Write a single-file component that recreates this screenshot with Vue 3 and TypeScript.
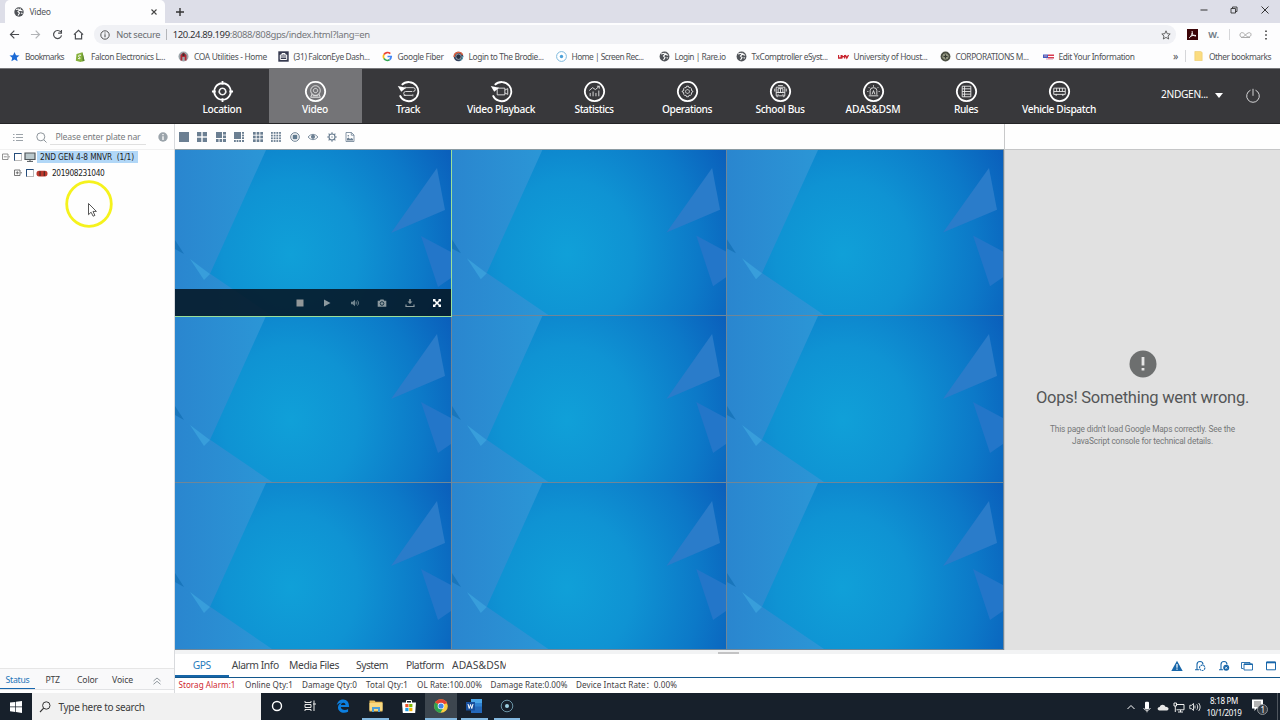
<script setup lang="ts">
import type { Directive } from 'vue'

// Tracks a label out or in so that it takes the given width in pixels.
const vFit: Directive<HTMLElement, number> = {
  mounted(el, { value }) {
    const range = document.createRange()
    range.selectNodeContents(el)
    const natural = range.getBoundingClientRect().width
    const count = (el.textContent ?? '').trim().length
    if (count > 1) el.style.letterSpacing = `${(value - natural) / count}px`
  },
}

interface Bookmark { label: string; icon: string; width: number }
const bookmarks: Bookmark[] = [
  { label: 'Bookmarks', icon: 'star', width: 39 },
  { label: 'Falcon Electronics L...', icon: 'shop', width: 74 },
  { label: 'COA Utilities - Home', icon: 'coa', width: 73 },
  { label: '(31) FalconEye Dash...', icon: 'dash', width: 76 },
  { label: 'Google Fiber', icon: 'google', width: 46 },
  { label: 'Login to The Brodie...', icon: 'brodie', width: 75 },
  { label: 'Home | Screen Rec...', icon: 'screen', width: 72 },
  { label: 'Login | Rare.io', icon: 'globe', width: 51 },
  { label: 'TxComptroller eSyst...', icon: 'globe', width: 76 },
  { label: 'University of Houst...', icon: 'uhv', width: 74 },
  { label: 'CORPORATIONS M...', icon: 'seal', width: 73 },
  { label: 'Edit Your Information', icon: 'flag', width: 76 },
]

interface NavItem { label: string; width: number; ring: string; art: string; solid?: string }
const ring = 'M12 2a10 10 0 1 0 .01 0z'
const backRing = 'M5 5.2A10 10 0 1 1 3 16'
const arrow = 'M.8 6.2 9.5 8 4.4 12.2z'
const nav: NavItem[] = [
  { label: 'Location', width: 39, ring: 'M12 3.4a8.6 8.6 0 1 0 .01 0zM12 1v4M12 19v4M1 12h4M19 12h4', art: 'M12 8.6a3.4 3.4 0 1 0 .01 0z' },
  { label: 'Video', width: 26, ring, art: 'M12 6a5 5 0 1 0 .01 0zM12 8.8a2.2 2.2 0 1 0 .01 0zM8.4 14.5 7 18h10l-1.4-3.5M9 16.5h6' },
  { label: 'Track', width: 24, ring: backRing, solid: arrow, art: 'M9 8h8M9 12h7M7 16h9M17 8a2 2 0 0 1 0 4M9 12a2 2 0 0 0 0 4M8.5 7v2M16.5 15v2' },
  { label: 'Video Playback', width: 68, ring: backRing, solid: arrow, art: 'M7.5 8.5h8v7h-8zM15.5 10.5 18.5 9v6l-3-1.5' },
  { label: 'Statistics', width: 39, ring, art: 'M6.5 11 10 8l3 2 4-3.5M14.5 6.5H17V9M7.5 13.5V17M10.5 12v5M13.5 13.5V17M16.5 11v6' },
  { label: 'Operations', width: 50, ring, art: 'M9 8h1.5l.5-1.5h2l.5 1.5H15l1.2 1v2l1.3.5v1l-1.3.7V15L15 16h-1.500l-.5 1.500h-2l-.5-1.500H9l-1-1v-2l-1.500-.5v-1L8 11V9zM12 10a2 2 0 1 0 .01 0z' },
  { label: 'School Bus', width: 49, ring, art: 'M7.500 7.500h9v9h-9zM7.500 13h9M9.500 5.800h5M8.500 16.500V18M15.500 16.500V18M9.500 9h5v4h-5zM12 9v4M9 15h1M14 15h1M6 9v3M18 9v3' },
  { label: 'ADAS&DSM', width: 55, ring, art: 'M8.500 15.500V11a3.500 3 0 0 1 7 0v4.500M7 16.500h10M12 5.500V7M7 7.500l1 1M17 7.500l-1 1M5.500 12h1.200M17.300 12h1.200M10.500 15l1.500-4 1.500 4' },
  { label: 'Rules', width: 24, ring, art: 'M7.500 6.500h9v11h-9zM7.500 9.200h9M7.500 12h9M7.500 14.800h9M10 6.500v11' },
  { label: 'Vehicle Dispatch', width: 74, ring, art: 'M6 8.500h12v6.500H6zM6 12h12M9 8.500V12M12 8.500V12M15 8.500V12M8.500 14.500v2.200M15.500 14.500v2.200' },
]

interface Box { x: number; y: number; w: number; h: number }
const cells = (n: number, size: number, step: number): Box[] =>
  Array.from({ length: n * n }, (_, i) => ({ x: (i % n) * step, y: Math.floor(i / n) * step, w: size, h: size }))
const layouts: Box[][] = [
  [{ x: 0, y: 0, w: 10, h: 10 }],
  cells(2, 4.3, 5.700),
  [{ x: 0, y: 0, w: 6, h: 6 }, { x: 7, y: 0, w: 3, h: 2.6 }, { x: 7, y: 3.500, w: 3, h: 2.600 }, { x: 0, y: 7, w: 2.600, h: 3 }, { x: 3.500, y: 7, w: 2.600, h: 3 }, { x: 7, y: 7, w: 3, h: 3 }],
  [{ x: 0, y: 0, w: 7, h: 7 }, { x: 8, y: 0, w: 2, h: 1.800 }, { x: 8, y: 2.600, w: 2, h: 1.800 }, { x: 8, y: 5.200, w: 2, h: 1.800 }, { x: 0, y: 8, w: 1.800, h: 2 }, { x: 2.600, y: 8, w: 1.800, h: 2 }, { x: 5.200, y: 8, w: 1.800, h: 2 }, { x: 8, y: 8, w: 2, h: 2 }],
  cells(3, 2.700, 3.650),
  cells(4, 1.800, 2.700),
]

const sideTabs = [
  { label: 'Status', width: 24 },
  { label: 'PTZ', width: 14 },
  { label: 'Color', width: 21 },
  { label: 'Voice', width: 21 },
]
const infoTabs = [
  { label: 'GPS', width: 18 },
  { label: 'Alarm Info', width: 47 },
  { label: 'Media Files', width: 50 },
  { label: 'System', width: 32 },
  { label: 'Platform', width: 38 },
  { label: 'ADAS&DSM', width: 57 },
]
const stats = [
  { label: 'Storag Alarm:1', width: 57 },
  { label: 'Online Qty:1', width: 48 },
  { label: 'Damage Qty:0', width: 55 },
  { label: 'Total Qty:1', width: 42 },
  { label: 'OL Rate:100.00%', width: 65 },
  { label: 'Damage Rate:0.00%', width: 77 },
  { label: 'Device Intact Rate：0.00%', width: 101 },
]
</script>

<template>
  <div class="screen">
    <header class="chrome">
      <div class="strip">
        <div class="tab">
          <svg class="i10" viewBox="0 0 10 10"><circle cx="5" cy="5" r="4.700" fill="#505358" /><path d="M2 2.500 4.500 2l1 1.200L4 4.500 5.500 6 4 8.500M6.500 1.500 6 3l2.500 1M7 6l1.500.5" stroke="#fff" stroke-width="1.100" fill="none" /></svg>
          <span v-fit="21" class="tab-name">Video</span>
          <svg class="i8 tab-x" viewBox="0 0 8 8"><path d="M1.500 1.500l5 5M6.500 1.500l-5 5" stroke="#444" stroke-width="1.100" /></svg>
        </div>
        <svg class="plus" viewBox="0 0 10 10"><path d="M5 1v8M1 5h8" stroke="#333" stroke-width="1.400" /></svg>
        <div class="win">
          <svg viewBox="0 0 10 10"><path d="M1.500 5h7" stroke="#333" /></svg>
          <svg viewBox="0 0 10 10"><path d="M2 3.500h4.500V8H2zM3.500 3.500V2H8v4.500H6.500" stroke="#333" stroke-width=".9" fill="none" /></svg>
          <svg viewBox="0 0 10 10"><path d="M1.500 1.500l7 7M8.500 1.500l-7 7" stroke="#333" /></svg>
        </div>
      </div>
      <div class="toolbar">
        <svg viewBox="0 0 12 12"><path d="M11 6H1.800M5.800 1.800 1.600 6l4.200 4.200" class="tool" /></svg>
        <svg viewBox="0 0 12 12"><path d="M1 6h9.200M6.200 1.800 10.400 6l-4.200 4.200" class="tool pale" /></svg>
        <svg viewBox="0 0 12 12"><path d="M9.500 3.200A4.400 4.400 0 1 0 10.400 7M10.300 1v3.600H6.700" class="tool" /></svg>
        <svg viewBox="0 0 12 12"><path d="M1 6.200 6 1.500l5 4.700M2.600 5.500v5.300h6.800V5.500" class="tool" /></svg>
        <div class="omni">
          <svg viewBox="0 0 10 10"><circle cx="5" cy="5" r="4.200" fill="none" stroke="#555" /><path d="M5 4.300v3M5 2.400v1" stroke="#555" stroke-width="1.100" /></svg>
          <span v-fit="44" class="unsafe">Not secure</span><i class="bar"></i>
          <span v-fit="197" class="url"><b>120.24.89.199</b>:8088/808gps/index.html?lang=en</span>
          <svg class="fav" viewBox="0 0 10 10"><path d="M5 .8 6.200 3.700l3 .3L7 6l.7 3L5 7.400 2.300 9 3 6 .8 4l3-.3z" stroke="#555" stroke-width=".9" fill="none" /></svg>
        </div>
        <svg class="acro" viewBox="0 0 11 11"><rect width="11" height="11" fill="#3b0508" /><path d="M2 9c2-1 4-5 3-7M5 4c.5 2 2 3 4 3M3.300 7.500C5 6.500 7 6 9 6.500" stroke="#fff" fill="none" /></svg>
        <span class="w">W.</span>
        <i class="bar sep"></i>
        <svg class="loop" viewBox="0 0 13 10"><path d="M6.500 5C4 1.500 1 2.200 1 5s3 3 5.500 0S12 2 12 4.500 9 8 6.500 5M2 7.500h9" stroke="#aaa" fill="none" /></svg>
        <svg class="dots" viewBox="0 0 4 12"><path d="M1 1.500h2M1 6h2M1 10.500h2" stroke="#444" stroke-width="1.900" /></svg>
      </div>
      <div class="marks">
        <div v-for="b in bookmarks" :key="b.label" class="mark">
          <svg viewBox="0 0 11 11">
            <path v-if="b.icon === 'star'" d="M5.500 1 7 4.200l3.500.3-2.700 2.300.8 3.500-3.100-1.900-3.100 1.900.8-3.500L.5 4.500 4 4.200z" fill="#1c6bd6" />
            <g v-else-if="b.icon === 'shop'"><path d="M1.500 3 7.500 1.200 9.500 9.800 5.500 11 .8 9.800z" fill="#86b13c" /><path d="M7.500 1.200 9.500 9.800l-2 .6z" fill="#5b8431" /><path d="M6 4.300c-3-.8-3 1.400-1.500 2s.5 2.200-1.500 1" stroke="#fff" fill="none" /></g>
            <g v-else-if="b.icon === 'coa'"><circle cx="5.500" cy="5.500" r="5" fill="#9ba5aa" /><path d="M2.500 9.500V4l3-2.500 3 2.500v5.500H6.700V6H4.300v3.500z" fill="#b02834" /><path d="M4.500 2.500h2V5h-2z" fill="#333" /></g>
            <g v-else-if="b.icon === 'dash'"><rect x=".3" y=".3" width="10.400" height="10.400" fill="#363a50" /><path d="M2.300 4h6.400v4.500H2.300zM4 4V2.500h3V4M2.300 6h6.400" stroke="#fff" fill="none" /></g>
            <g v-else-if="b.icon === 'google'" fill="none" stroke-width="1.700"><path d="M8.300 2.700A4 4 0 0 0 2 3.500" stroke="#e94335" /><path d="M2 3.500a4 4 0 0 0 0 4" stroke="#f9bc15" /><path d="M2 7.500a4 4 0 0 0 5.500 1.200" stroke="#34a853" /><path d="M7.500 8.700a4 4 0 0 0 1.700-3.200H5.500" stroke="#4285f4" /></g>
            <g v-else-if="b.icon === 'brodie'"><circle cx="5.500" cy="5.500" r="4.800" fill="#33415e" /><path d="M1.200 6A4.400 4.400 0 0 1 9.600 4" stroke="#e2623c" stroke-width="1.400" fill="none" /><path d="M9.800 5a4.400 4.400 0 0 1-3 4.600" stroke="#5aa7b4" fill="none" /><circle cx="5.500" cy="5.700" r="2.700" fill="#263042" stroke="#ddd" stroke-width=".6" /></g>
            <g v-else-if="b.icon === 'screen'"><circle cx="5.500" cy="5.500" r="4.900" fill="#fff" stroke="#7cb8dd" /><circle cx="5.500" cy="5.500" r="1.700" fill="#4ba0d8" /></g>
            <g v-else-if="b.icon === 'globe'"><circle cx="5.500" cy="5.500" r="4.900" fill="#505358" /><path d="M2 3 5 2.300l1 1.200L4.500 5 6 6.500 4.500 9M7 1.800 6.500 3.300l2.700 1M7.500 6.700l1.500.3" stroke="#fff" stroke-width="1.100" fill="none" /></g>
            <path v-else-if="b.icon === 'uhv'" d="M.5 4v3h2.700V4M4 7.500V4M4 5.700h2.500M6.600 4v3.500M7.300 4l1.500 3L10.500 4" stroke="#c8232e" stroke-width="1.300" fill="none" />
            <g v-else-if="b.icon === 'seal'"><circle cx="5.500" cy="5.500" r="4.900" fill="#4b4f42" /><circle cx="5.500" cy="5.500" r="2.800" fill="#8a8e79" stroke="#d2d0bb" stroke-width=".6" stroke-dasharray="1 .7" /><path d="M5.500 3.500v4M3.500 5.500h4" stroke="#373b32" /></g>
            <g v-else><path d="M0 3.500h5V7H0z" fill="#415fc4" /><path d="M5 4.300h6M5 6.800h6" stroke="#d83b50" stroke-width="1.500" /><path d="M1 5h3M3 8h7" stroke="#d99ab2" /></g>
          </svg>
          <span v-fit="b.width">{{ b.label }}</span>
        </div>
        <div class="more">»</div>
        <div class="other">
          <svg viewBox="0 0 8 10"><path d="M.3.5h6l1.400 1V9.700H.3z" fill="#fbdc80" stroke="#e8c660" stroke-width=".5" /></svg>
          <span v-fit="62">Other bookmarks</span>
        </div>
      </div>
    </header>

    <nav class="nav">
      <div v-for="n in nav" :key="n.label" class="nav-item" :class="{ active: n.label === 'Video' }">
        <svg viewBox="0 0 24 24">
          <path :d="n.ring" class="ring" />
          <path :d="n.art" class="art" :class="{ bold: n.label === 'Location' }" />
          <path v-if="n.solid" :d="n.solid" fill="#fff" />
        </svg>
        <span v-fit="n.width">{{ n.label }}</span>
      </div>
      <div class="user"><span v-fit="47">2NDGEN...</span><i class="caret"></i></div>
      <svg class="power" viewBox="0 0 16 16"><path d="M5.500 2.200A6.300 6.300 0 1 0 10.500 2.200M8 .8v7" stroke="#d4d4d6" stroke-width="1" fill="none" /></svg>
    </nav>

    <main class="main">
      <aside class="side">
        <div class="search">
          <svg class="list" viewBox="0 0 10 9"><path d="M0 1.500h1.500M3 1.500h7M0 4.500h1.500M3 4.500h7M0 7.500h1.500M3 7.500h7" stroke="#91999f" stroke-width=".9" /></svg>
          <svg class="glass" viewBox="0 0 11 11"><circle cx="4.800" cy="4.800" r="4" fill="none" stroke="#8d959b" /><path d="M7.800 7.800 10.500 10.500" stroke="#8d959b" /></svg>
          <div class="plate"><span v-fit="85">Please enter plate nar</span></div>
          <svg class="info" viewBox="0 0 10 10"><circle cx="5" cy="5" r="4.700" fill="#9aa3aa" /><path d="M5 4.300v3.700M5 2v1.300" stroke="#fff" stroke-width="1.300" /></svg>
        </div>
        <div class="row root">
          <svg class="exp" viewBox="0 0 8 8"><path d="M.5 1h5.500v5.500H.5zM1.800 3.800h3M6.500 3.800H8" stroke="#777" stroke-width=".8" fill="none" /></svg>
          <i class="check"></i>
          <svg class="pc" viewBox="0 0 12 10"><path d="M1 1h10v6.500H1z" fill="#bbc9cd" stroke="#50565a" stroke-width="1.200" /><path d="M6 7.500v2M3 9.400h6" stroke="#50565a" /></svg>
          <span class="picked"><span v-fit="94">2ND GEN 4-8 MNVR&nbsp; (1/1)</span></span>
        </div>
        <div class="row child">
          <svg class="exp" viewBox="0 0 8 8"><path d="M.5 1h5.500v5.500H.5zM1.800 3.800h3M3.300 2.300v3M6.500 3.800H8" stroke="#555" stroke-width=".8" fill="none" /></svg>
          <i class="check"></i>
          <svg class="car" viewBox="0 0 12 7"><rect x=".5" y=".8" width="11" height="5.600" rx="2.600" fill="#bd382c" /><path d="M4 1.200v4.700M8.300 1.200v4.700" stroke="#4b2927" stroke-width="1.200" /></svg>
          <span v-fit="52.5">201908231040</span>
        </div>
        <div class="side-tabs">
          <div v-for="t in sideTabs" :key="t.label" :class="{ on: t.label === 'Status' }"><span v-fit="t.width">{{ t.label }}</span></div>
          <svg viewBox="0 0 8 8"><path d="M.5 4 4 1l3.500 3M.5 7.300 4 4.300l3.500 3" stroke="#91999f" fill="none" /></svg>
        </div>
      </aside>

      <section class="work">
        <div class="upper">
          <div class="player">
            <div class="tools">
              <svg v-for="(l, i) in layouts" :key="i" viewBox="0 0 10 10"><rect v-for="(c, j) in l" :key="j" :x="c.x" :y="c.y" :width="c.w" :height="c.h" fill="#6b7f92" /></svg>
              <svg viewBox="0 0 10 10"><circle cx="5" cy="5" r="4.300" fill="none" stroke="#6b7f92" stroke-width="1" /><rect x="2.700" y="2.700" width="4.600" height="4.600" rx="1" fill="#607a90" /></svg>
              <svg viewBox="0 0 10 10"><path d="M.2 5C2.500 1.500 7.500 1.500 9.800 5 7.500 8.500 2.500 8.500.2 5z" fill="none" stroke="#6b7f92" stroke-width=".9" /><circle cx="5" cy="4.800" r="2.100" fill="#6b7f92" /></svg>
              <svg viewBox="0 0 10 10"><circle cx="5" cy="5" r="3" fill="none" stroke="#6b7f92" stroke-width="1.100" /><path d="M5 .2v2M5 7.800v2M.2 5h2M7.800 5h2M1.600 1.600 3 3M7 7l1.400 1.400M8.400 1.600 7 3M3 7 1.600 8.400" stroke="#6b7f92" stroke-width="1.100" /><circle cx="5" cy="5" r=".7" fill="#6b7f92" /></svg>
              <svg viewBox="0 0 10 10"><path d="M1 .5h5.500L9 3v6.500H1zM6.300.5v2.700H9" fill="none" stroke="#6b7f92" stroke-width=".8" /><path d="M2 8.500V6.500L3.500 5.500 5 7l1.500-1L8 7v1.500z" fill="#6b7f92" /><circle cx="3.300" cy="3.700" r=".8" fill="#6b7f92" /></svg>
            </div>
            <div class="tiles">
              <div v-for="n in 9" :key="n" class="tile" :class="{ chosen: n === 1 }">
                <svg class="art-bg" viewBox="0 0 276 166" preserveAspectRatio="none">
                  <defs>
                    <radialGradient :id="'sky' + n" gradientUnits="userSpaceOnUse" cx="116" cy="104" r="190" gradientTransform="translate(0 -12) scale(1 1.120)">
                      <stop offset="0" stop-color="#10a0d8" />
                      <stop offset=".35" stop-color="#0f93d3" />
                      <stop offset=".7" stop-color="#0c79c8" />
                      <stop offset="1" stop-color="#0a5cba" />
                    </radialGradient>
                    <linearGradient :id="'haze' + n" x1="0" x2="1"><stop offset="0" stop-color="#2a86cf" /><stop offset="1" stop-color="#2b96d6" /></linearGradient>
                  </defs>
                  <rect width="276" height="166" :fill="`url(#sky${n})`" />
                  <path d="M0 0H91L34 126 0 100z" :fill="`url(#haze${n})`" />
                  <path d="M0 97 34 123 97 166H0z" :fill="`url(#haze${n})`" />
                  <path d="M0 90 9 104 0 99z" fill="#1976bc" />
                  <path d="M15 109 35 124 29 130z" fill="#389edb" />
                  <path d="M262 18 270 60 216 83z" fill="#2a7cca" />
                  <path d="M246 86 276 102V128L263 137z" fill="#2376c9" />
                </svg>
                <div v-if="n === 1" class="controls">
                  <svg viewBox="0 0 10 10"><path d="M1.500 1.500h7v7h-7z" fill="#929798" /></svg>
                  <svg viewBox="0 0 10 10"><path d="M2 1.500 8.500 5 2 8.500z" fill="#8c999f" /></svg>
                  <svg viewBox="0 0 10 10"><path d="M1 3.800h1.700L5 1.800v6.400L2.700 6.200H1z" fill="#71858f" /><path d="M6.200 3.500v3M7.500 2.500c1.200 1 1.200 4 0 5" stroke="#71858f" fill="none" /></svg>
                  <svg viewBox="0 0 10 10"><path d="M.7 2.700h2l.8-1.300h3l.8 1.300h2v6H.7z" fill="#8c999f" /><circle cx="5" cy="5.500" r="1.800" fill="none" stroke="#173447" /></svg>
                  <svg viewBox="0 0 10 10"><path d="M4.200 1h1.600v2.500h1.700L5 6 2.500 3.500h1.700z" fill="#8c999f" /><path d="M1 6.500v2h8v-2" stroke="#8c999f" stroke-width="1.200" fill="none" /></svg>
                  <svg viewBox="0 0 10 10"><path d="M2 2l6 6M8 2 2 8" stroke="#fff" stroke-width="1.700" /><path d="M1 4V1h3zM6 1h3v3zM9 6v3H6zM4 9H1V6z" fill="#fff" /></svg>
                </div>
              </div>
            </div>
          </div>
          <div class="map">
            <div class="map-head"></div>
            <div class="map-body">
              <svg viewBox="0 0 28 28"><circle cx="14" cy="14" r="13.500" fill="#6d6f6f" /><path d="M14 7v8.500M14 18v2.600" stroke="#e6e6e6" stroke-width="2.800" /></svg>
              <h1 v-fit="213">Oops! Something went wrong.</h1>
              <p><span v-fit="185">This page didn't load Google Maps correctly. See the</span><br><span v-fit="141">JavaScript console for technical details.</span></p>
            </div>
          </div>
        </div>
        <div class="grip"><i></i></div>
        <div class="tabs">
          <div v-for="t in infoTabs" :key="t.label" class="itab" :class="{ on: t.label === 'GPS', cut: t.label === 'ADAS&DSM' }"><span v-fit="t.width">{{ t.label }}</span></div>
          <div class="acts">
            <svg viewBox="0 0 12 12"><path d="M6 .8 11.700 11H.3z" fill="#1867aa" /><path d="M6 4v3.700M6 8.500v1.300" stroke="#fff" stroke-width="1.200" /></svg>
            <svg viewBox="0 0 12 12"><path d="M3 9.500V4.500a3 3 0 0 1 6 0M1 9.800h4" stroke="#1867aa" fill="none" stroke-width="1.100" /><circle cx="8.200" cy="7.800" r="2.700" fill="none" stroke="#1867aa" stroke-dasharray="2 .7" stroke-width="1.100" /></svg>
            <svg viewBox="0 0 12 12"><path d="M3 9.500V4.500a3 3 0 0 1 6 0M1 9.800h4" stroke="#1867aa" fill="none" stroke-width="1.100" /><circle cx="8.200" cy="7.800" r="3" fill="#1867aa" /><path d="m7.200 6.800 2 2M9.200 6.800l-2 2" stroke="#fff" stroke-width=".8" /></svg>
            <svg viewBox="0 0 12 12"><path d="M2.500 8.500h-2v-6h8.500v1.500M3 4h8.500v6H3z" stroke="#1867aa" fill="none" stroke-width=".9" /><path d="M3 4.300h8.500" stroke="#1867aa" stroke-width="1.400" /></svg>
            <svg viewBox="0 0 12 12"><path d="M1.500 2h9v7.800h-9z" stroke="#1867aa" fill="none" /><path d="M1.500 2.500h9" stroke="#1867aa" stroke-width="1.600" /></svg>
          </div>
        </div>
        <div class="stats"><div v-for="s in stats" :key="s.label"><span v-fit="s.width">{{ s.label }}</span></div></div>
      </section>
    </main>

    <footer class="task">
      <div class="start"><svg viewBox="0 0 12 12"><path d="M0 1.600 5.300.9v4.700H0zM6 .8l6-.8v5.600H6zM0 6.300h5.300V11L0 10.300zM6 6.300h6V12l-6-.9z" fill="#fff" /></svg></div>
      <div class="find">
        <svg viewBox="0 0 12 12"><circle cx="7.300" cy="4.500" r="3.700" fill="none" stroke="#333" /><path d="M4.700 7.200 1 11" stroke="#333" stroke-width="1.100" /></svg>
        <span v-fit="86">Type here to search</span>
      </div>
      <div class="apps">
        <div><svg viewBox="0 0 14 14"><circle cx="7" cy="7" r="4.500" fill="none" stroke="#fff" stroke-width="1.400" /></svg></div>
        <div><svg viewBox="0 0 14 14"><path d="M2 2v1.500h6V2M2 5.500h6v3H2zM2 12v-1.500h6V12M11 1.500V12M10 5h3" stroke="#e8e8e8" fill="none" /></svg></div>
        <div><svg viewBox="0 0 14 14"><path d="M.7 6.300C1.500 2 4.200.4 7.200.4c4 0 6 3 5.900 7.700H4.800c.2 3 4.600 3.700 7.300 2v2.600C7.500 15.300 1.800 13 2 8.300 2.100 6 3.500 4.500 5.500 3.800 3.700 3.900 1.700 4.700.7 6.300zM5 6h4.500C9.500 2.800 5.300 3 5 6z" fill="#0c7fe0" /></svg></div>
        <div class="open"><svg viewBox="0 0 14 14"><path d="M.5 1.500h5l1 1.200h7v9.800H.5z" fill="#e9bd58" /><path d="M.5 4h13v7.500H.5z" fill="#f9da82" /><path d="M3 13V8h8v5H9v-3H5v3z" fill="#4c9fd8" /></svg></div>
        <div><svg viewBox="0 0 14 14"><path d="M4.500 4V1.500h5V4" stroke="#fff" fill="none" /><path d="M0 3.500h14L13.200 14H.8z" fill="#fff" /><path d="M3.300 5h3.200v3.200H3.300z" fill="#ee5228" /><path d="M7.200 5h3.200v3.200H7.200z" fill="#7fba00" /><path d="M3.300 9h3.200v3.200H3.300z" fill="#1f9fe8" /><path d="M7.200 9h3.200v3.200H7.200z" fill="#f5b400" /></svg></div>
        <div class="open lit"><svg viewBox="0 0 14 14"><circle cx="7" cy="7" r="6.800" fill="#fdcf40" /><path d="M7 7 1.100 3.600A6.800 6.800 0 0 1 12.900 3.600z" fill="#e34234" /><path d="M7 7 1.100 3.600A6.800 6.800 0 0 0 6.500 13.800L9.500 8.500z" fill="#2fa24f" /><path d="M6.500 3.600h6.400L13 4.500H7z" fill="#e34234" /><circle cx="7" cy="7" r="3.300" fill="#fff" /><circle cx="7" cy="7" r="2.600" fill="#4285e8" /></svg></div>
        <div class="open"><svg class="word" viewBox="0 0 17 14"><path d="M5 0h11v14H5z" fill="#2468ba" /><path d="M5 0h11v4H5z" fill="#49a4e8" /><path d="M5 4h11v3.500H5z" fill="#2f82d2" /><path d="M0 3h9v8.500H0z" fill="#174f9e" /><path d="m2 5 1.200 4.500L4.500 5.500l1.300 4L7 5" stroke="#fff" fill="none" /></svg></div>
        <div class="open"><svg viewBox="0 0 14 14"><circle cx="7" cy="7" r="5.800" fill="none" stroke="#6a93a5" /><circle cx="7" cy="7" r="2" fill="#9ed0e2" /></svg></div>
      </div>
      <div class="tray">
        <svg viewBox="0 0 12 12"><path d="M2.500 8 6 4.500 9.500 8" stroke="#fff" fill="none" /></svg>
        <svg viewBox="0 0 12 12"><rect x="4" y=".8" width="4" height="7.500" rx="1" fill="#fff" /><path d="M2.800 7c0 3 6.400 3 6.400 0M6 9v2.300" stroke="#ddd" fill="none" /></svg>
        <svg viewBox="0 0 12 12"><path d="M2.500 9.500C-.5 9 .5 6 2.700 6 3.500 3 7.500 3 8.300 5.700 12 5.500 12.500 9 10 9.500z" fill="#e7e7e7" /></svg>
        <svg viewBox="0 0 12 12"><path d="M4 3.500h7v5.300H3.500M7.500 9v2M5 11h5M1 2h2.500v3H1zM2.300 5v6" stroke="#eee" fill="none" /></svg>
        <svg viewBox="0 0 12 12"><path d="M.8 4.300h1.700L4.500 2.500v7L2.500 7.700H.8zM6 4.500v3M7.800 3.300c1.200 1.500 1.200 3.900 0 5.400M9.600 2c2 2.500 2 5.500 0 8" stroke="#eee" stroke-width=".9" fill="none" /></svg>
      </div>
      <div class="clock"><span v-fit="28">8:18 PM</span><span v-fit="35">10/1/2019</span></div>
      <svg class="note" viewBox="0 0 18 18"><path d="M1 1.500h11v9H5.500L3.500 13v-2.500H1z" fill="#fff" /><path d="M3 4h7M3 6h7M3 8h5" stroke="#444" stroke-width=".8" /><circle cx="11.500" cy="11.500" r="5" fill="#343b43" stroke="#a4a8ac" stroke-width=".8" /><text x="9.600" y="14.500" fill="#fff" font-size="8">1</text></svg>
      <i class="peek"></i>
    </footer>

    <div class="halo"><svg viewBox="0 0 50 50"><circle cx="25" cy="25" r="22.300" fill="none" stroke="#f5f21d" stroke-width="2.800" /><path d="M24.500 24.500v11.200l2.600-2.500 2 4 1.800-.8-1.900-4h3.400z" fill="#fff" stroke="#444" stroke-width=".9" /></svg></div>
  </div>
</template>

<style>
html, body { margin: 0; overflow: hidden; }
</style>

<style scoped>
* { box-sizing: border-box; }
svg { display: block; flex: none; }
.screen { position: relative; width: 1280px; height: 720px; display: flex; flex-direction: column; overflow: hidden; background: #fff; color: #3f4144; font-family: "Noto Sans", "Open Sans", "Noto Sans CJK SC", sans-serif; font-size: 9px; white-space: nowrap; }
.chrome { height: 68px; flex: none; background: #fdfdfe; }
.strip { height: 23px; display: flex; background: #dddee8; }
.tab { width: 160px; height: 23px; margin-left: 5px; padding: 0 7px 0 9px; display: flex; align-items: center; background: #fdfdfe; border-radius: 5px 5px 0 0; }
.i10 { width: 10px; height: 10px; }
.i8 { width: 8px; height: 8px; }
.tab-name { margin-left: 5.500px; color: #55575b; font-size: 8.600px; }
.tab-x { margin-left: auto; }
.plus { width: 10px; height: 10px; margin: 7px 0 0 10px; }
.win { margin: 5px 10.500px 0 auto; display: flex; gap: 20.500px; }
.win svg { width: 10px; height: 10px; }
.toolbar { height: 23px; display: flex; align-items: center; padding-left: 9px; }
.toolbar > svg { width: 11px; height: 11px; margin-right: 10.300px; }
.tool { fill: none; stroke: #4a4c50; stroke-width: 1.300; }
.pale { stroke: #b2b4b7; }
.omni { width: 1082px; height: 19px; padding: 0 5px 0 6px; display: flex; align-items: center; border-radius: 9px; background: #f0f1f5; }
.omni svg { width: 10px; height: 10px; }
.unsafe { margin: 0 0 0 6px; font-size: 9.300px; color: #696c70; }
.bar { width: 1px; height: 11px; margin: 0 6px 0 5.500px; background: #b4b6ba; }
.url { font-size: 9.500px; color: #75777b; }
.url b { font-weight: 400; color: #303236; }
.omni .fav { margin-left: auto; }
.toolbar .acro { margin: 0 0 0 11px; }
.w { width: 12px; margin-left: 10px; font-weight: 700; font-size: 9px; color: #75818b; }
.bar.sep { margin: 0 8.500px 0 9px; background: #d5d6d9; }
.toolbar .loop { width: 13px; height: 10px; margin: 0; }
.toolbar .dots { width: 4px; height: 10px; margin: 0 0 0 12.500px; }
.marks { height: 21px; display: grid; grid-template-columns: 66px 103px 99.500px 104px 71px 103px 103px 77px 102px 102px 103px 130.500px 30px 1fr; align-items: center; padding: 0 0 1px 9px; font-size: 8.400px; color: #505256; }
.mark { display: flex; align-items: center; gap: 5px; }
.mark svg { width: 11px; height: 11px; }
.more { font-size: 10.500px; line-height: 12px; }
.other { display: flex; align-items: center; height: 12px; padding: 0 0 0 8px; margin-left: -18px; border-left: 1px solid #d5d6d9; }
.other svg { width: 9px; height: 10px; margin-right: 6px; }

.nav { height: 56px; flex: none; display: flex; padding-left: 175.500px; background: #38383b; border-top: 1px solid #77787b; border-bottom: 1px solid #242426; color: #fff; }
.nav-item { width: 93px; display: flex; flex-direction: column; align-items: center; padding-top: 11px; }
.nav-item.active { background: #747477; }
.nav-item svg { width: 23px; height: 23px; }
.nav-item span { margin-top: -1.500px; font-size: 10.200px; line-height: 15px; font-weight: 500; }
.ring { fill: none; stroke: #fff; stroke-width: 1.900; }
.art { fill: none; stroke: #f0f0f0; stroke-width: .9; }
.art.bold { stroke-width: 1.700; }
.user { width: 62px; margin: 16px 0 0 55.500px; display: flex; align-items: center; height: 18px; justify-content: space-between; font-size: 10.200px; }
.caret { border: 4.500px solid transparent; border-top: 5px solid #fff; border-bottom: 0; margin-top: 3px; }
.power { width: 16px; height: 16px; margin: 19px 0 0 21.500px; }

.main { flex: 1; min-height: 0; display: flex; }
.side { width: 175px; flex: none; display: flex; flex-direction: column; border-right: 1px solid #d8dadd; background: #fefefe; }
.search { height: 26px; flex: none; display: flex; align-items: center; padding: 1px 0 0 13px; border-bottom: 1px solid #f1f1f1; }
.list { width: 10px; height: 9px; margin-right: 13px; }
.glass { width: 11px; height: 11px; margin-right: 3px; }
.plate { width: 96px; height: 17px; margin: 0 12px 2px 0; padding-left: 5.500px; line-height: 19px; border-bottom: 1px solid #e0e0e0; color: #777a7d; font-size: 8.700px; }
.info { width: 10px; height: 10px; }
.row { display: flex; align-items: center; height: 16px; color: #222; font-family: "DejaVu Sans Condensed", "DejaVu Sans", sans-serif; font-stretch: condensed; font-size: 8.300px; }
.root { padding-left: 2px; margin-top: -1px; }
.child { padding-left: 14px; }
.exp { width: 8px; height: 8px; margin-right: 4px; }
.check { width: 8px; height: 8px; flex: none; border: 1px solid #bbb; border-top: 1.500px solid #244d7c; border-left: 1.500px solid #244d7c; }
.pc { width: 12px; height: 10px; margin-left: 2px; }
.picked { height: 12px; line-height: 12px; margin-left: 1px; padding: 0 4px 0 3px; background: #b1d7f7; }
.car { width: 12px; height: 7px; margin: 0 4px 0 2px; }
.side-tabs { height: 22px; flex: none; margin-top: auto; display: flex; align-items: stretch; margin-bottom: 3px; border-top: 1px solid #e6e6e6; background: #f9f9fa; border-bottom: 1px solid #e2e3e5; font-size: 8.700px; line-height: 22px; }
.side-tabs div { width: 35px; text-align: center; }
.side-tabs .on { color: #2374b9; border-bottom: 1.500px solid #1767ae; }
.side-tabs svg { width: 8px; height: 8px; margin: 8px 0 0 13px; }

.work { flex: 1; min-width: 0; display: flex; flex-direction: column; }
.upper { height: 526px; flex: none; display: flex; }
.player { width: 829px; display: flex; flex-direction: column; }
.tools { height: 26px; flex: none; display: flex; align-items: center; gap: 8.500px; padding-left: 3.500px; border-bottom: 1.500px solid #8b9ba3; background: #fefefe; }
.tools svg { width: 10px; height: 10px; }
.tiles { flex: 1; display: grid; grid-template-columns: 277px 275px 277px; grid-template-rows: 166px 167px 167px; }
.tile { position: relative; border-right: 1px solid #6f8698; border-bottom: 1px solid #6f8698; }
.tile.chosen { border-right-color: #9be099; z-index: 1; margin-bottom: -1px; border-bottom-color: #9be099; }
.art-bg { width: 100%; height: 100%; }
.controls { position: absolute; left: 0; right: 0; bottom: 0; height: 27px; display: flex; align-items: center; justify-content: flex-end; gap: 17.500px; padding-right: 9px; background: rgba(6, 24, 38, .89); }
.controls svg { width: 10px; height: 10px; }
.map { flex: 1; display: flex; flex-direction: column; border-left: 1px solid #c8c9ca; }
.map-head { height: 26px; border-bottom: 1px solid #c5c6c7; background: #fefefe; }
.map-body { flex: 1; display: flex; flex-direction: column; align-items: center; padding-top: 200px; background: #e1e1e1; font-family: Roboto, sans-serif; }
.map-body svg { width: 28px; height: 28px; }
.map-body h1 { margin: 9px 0 0; font-size: 16.500px; line-height: 22px; font-weight: 400; color: #545657; }
.map-body p { margin: 13.500px 0 0; text-align: center; font-size: 8.300px; line-height: 12px; color: #757778; }
.grip { height: 4px; flex: none; display: flex; justify-content: center; background: #f2f3f4; }
.grip i { width: 21px; height: 1.500px; margin: 2px 0 0 2px; background: #c3c3c4; }
.tabs { height: 24px; flex: none; display: flex; border-bottom: 1.500px solid #13578c; font-size: 10.300px; line-height: 22px; color: #424447; }
.itab { text-align: center; width: 58px; }
.itab:nth-child(1) { width: 53.500px; }
.itab:nth-child(2) { width: 53.500px; }
.itab:nth-child(3) { width: 64px; }
.itab:nth-child(4) { width: 52px; }
.itab:nth-child(5) { width: 54px; }
.itab.on { color: #2a7cbd; border-bottom: 2px solid #1666a8; }
.itab.cut { width: 54px; overflow: hidden; text-align: left; }
.acts { margin-left: auto; display: flex; align-items: center; gap: 11.600px; padding-right: 3px; }
.acts svg { width: 12px; height: 12px; }
.stats { height: 15px; flex: none; display: grid; grid-template-columns: 66.500px 57px 64px 51px 73.500px 85.500px 1fr; padding-left: 3.500px; font-size: 8.100px; line-height: 14px; }
.stats div:first-child { color: #cf2730; }

.task { height: 27px; flex: none; display: flex; align-items: center; background: #17202b; color: #fff; }
.start { width: 32px; padding-left: 10px; }
.start svg { width: 12px; height: 12px; }
.find { width: 229px; height: 27px; padding-left: 7px; display: flex; align-items: center; gap: 7.500px; background: #f1f1f1; color: #3c3c3c; font-size: 10px; }
.find svg { width: 12px; height: 12px; }
.apps { display: flex; height: 27px; }
.apps div { width: 32.800px; display: flex; align-items: center; justify-content: center; border-bottom: 2px solid transparent; }
.apps svg { width: 14px; height: 14px; }
.apps svg.word { width: 17px; }
.apps .open { width: 26.800px; margin: 0 3px; border-bottom-color: #83b8e0; }
.apps .lit { width: 32px; margin: 0 .4px; background: #3d464f; }
.tray { margin: 0 -3.500px 0 auto; display: flex; gap: 4px; }
.tray svg { width: 12px; height: 12px; }
.clock { width: 54px; display: flex; flex-direction: column; align-items: center; font-size: 8px; line-height: 12px; }
.note { width: 18px; height: 18px; margin-right: 8px; }
.peek { width: 1px; height: 27px; margin-right: 2px; background: #4f565e; }
.halo { position: absolute; left: 64px; top: 179px; }
.halo svg { width: 50px; height: 50px; }
</style>
